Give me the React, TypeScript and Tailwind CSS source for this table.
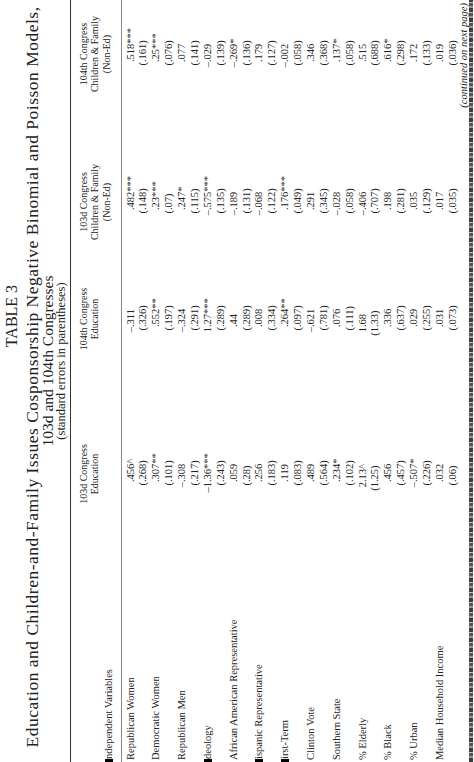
import React from 'react';

type Row = { label: string; mark?: boolean; cells: [string, string][] };

const ROWS: Row[] = [
  { label: 'Republican Women', cells: [['.456^', '(.268)'], ['–.311', '(.326)'], ['.482***', '(.148)'], ['.518***', '(.161)']] },
  { label: 'Democratic Women', cells: [['.307**', '(.101)'], ['.552**', '(.197)'], ['.23***', '(.07)'], ['.25***', '(.076)']] },
  { label: 'Republican Men', cells: [['–.308', '(.217)'], ['–.324', '(.291)'], ['.247*', '(.115)'], ['.077', '(.141)']] },
  { label: 'Ideology', mark: true, cells: [['–1.36***', '(.243)'], ['1.27***', '(.289)'], ['–.575***', '(.135)'], ['–.029', '(.139)']] },
  { label: 'African American Representative', cells: [['.059', '(.28)'], ['.44', '(.289)'], ['–.189', '(.131)'], ['–.269*', '(.136)']] },
  { label: 'Hispanic Representative', mark: true, cells: [['.256', '(.183)'], ['.008', '(.334)'], ['–.068', '(.122)'], ['.179', '(.127)']] },
  { label: 'First-Term', mark: true, cells: [['.119', '(.083)'], ['.264**', '(.097)'], ['.176***', '(.049)'], ['–.002', '(.058)']] },
  { label: 'Clinton Vote', cells: [['.489', '(.564)'], ['–.621', '(.781)'], ['.291', '(.345)'], ['.346', '(.368)']] },
  { label: 'Southern State', cells: [['.234*', '(.102)'], ['.076', '(.111)'], ['–.028', '(.058)'], ['.137*', '(.058)']] },
  { label: '% Elderly', cells: [['2.13^', '(1.25)'], ['1.68', '(1.33)'], ['–.406', '(.707)'], ['.515', '(.688)']] },
  { label: '% Black', cells: [['.456', '(.457)'], ['.336', '(.637)'], ['.198', '(.281)'], ['.616*', '(.298)']] },
  { label: '% Urban', cells: [['–.507*', '(.226)'], ['.029', '(.255)'], ['.035', '(.129)'], ['.172', '(.133)']] },
  { label: 'Median Household Income', cells: [['.032', '(.06)'], ['.031', '(.073)'], ['.017', '(.035)'], ['.019', '(.036)']] },
];

const HEADERS: string[][] = [
  ['103d Congress', 'Education'],
  ['104th Congress', 'Education'],
  ['103d Congress', 'Children & Family', '(Non-Ed)'],
  ['104th Congress', 'Children & Family', '(Non-Ed)'],
];

const GRID = 'grid grid-cols-[260px_155px_117px_148px_82px]';

// decimal-aligned number: integer part right-aligned in a fixed box
function Num({ v }: { v: string }) {
  const i = v.indexOf('.');
  return (
    <div className="flex whitespace-nowrap">
      <span className="w-[20px] text-right">{v.slice(0, i)}</span>
      <span>{v.slice(i)}</span>
    </div>
  );
}

function Mark() {
  return <span className="mr-[0.5px] inline-block h-[8px] w-[2.5px] bg-black align-[-1px]" />;
}

export default function App() {
  return (
    <div className="h-[762px] w-[474px] overflow-hidden bg-white">
      <div className="h-[474px] w-[762px] origin-top-left translate-y-[762px] -rotate-90 font-['Liberation_Serif',serif] text-[#222]">
        {/* title */}
        <div className="flex h-[23px] justify-center pl-[130px] text-[16px] leading-[23px]">TABLE 3</div>
        <div className="flex h-[18px] justify-center whitespace-nowrap pl-[8px] text-[17.5px] leading-[18px] tracking-[0.5px]">
          Education and Children-and-Family Issues Cosponsorship Negative Binomial and Poisson Models,
        </div>
        <div className="flex h-[14px] justify-center pl-[40px] text-[15.5px] leading-[14px]">103d and 104th Congresses</div>
        <div className="flex h-[12px] justify-center pl-[40px] text-[12.5px] leading-[12px]">(standard errors in parentheses)</div>

        {/* header */}
        <div className={`${GRID} mt-[2.5px] h-[52px] border-t-[1.5px] border-b border-t-[#333] border-b-[#888] pt-[7px] text-[10px] leading-[11.5px]`}>
          <div className="self-end whitespace-nowrap pb-[4.6px] text-[10.5px] leading-[12.9px]">
            <Mark />
            ndependent Variables
          </div>
          {HEADERS.map((h, i) => (
            <div key={i}>
              <div className="flex w-[56px] flex-col items-center whitespace-nowrap">
                {h.map((t) => (
                  <span key={t}>{t}</span>
                ))}
              </div>
            </div>
          ))}
        </div>

        {/* body */}
        <div className="h-[338.4px] pt-[3px] text-[10.5px] leading-[12.9px]">
          {ROWS.map((r) => (
            <div key={r.label}>
              <div className={`${GRID} h-[12.9px]`}>
                <div className={r.mark ? 'whitespace-nowrap' : 'whitespace-nowrap pl-[2px]'}>
                  {r.mark && <Mark />}
                  {r.mark ? r.label.slice(1) : r.label}
                </div>
                {r.cells.map((c, i) => (
                  <Num key={i} v={c[0]} />
                ))}
              </div>
              <div className={`${GRID} h-[12.9px]`}>
                <div />
                {r.cells.map((c, i) => (
                  <Num key={i} v={c[1]} />
                ))}
              </div>
            </div>
          ))}
        </div>

        <div className="-mt-[1px] flex h-[10px] justify-end pr-[3px] text-[10.5px] italic leading-[10px]">
          (continued on next page)
        </div>
        <div className="mt-[0.6px] h-[3.5px] bg-[repeating-linear-gradient(90deg,#3c3c3c_0px,#3c3c3c_4px,#9a9a9a_4px,#9a9a9a_6px,#555_6px,#555_9px,#bdbdbd_9px,#bdbdbd_10px)]" />
      </div>
    </div>
  );
}
